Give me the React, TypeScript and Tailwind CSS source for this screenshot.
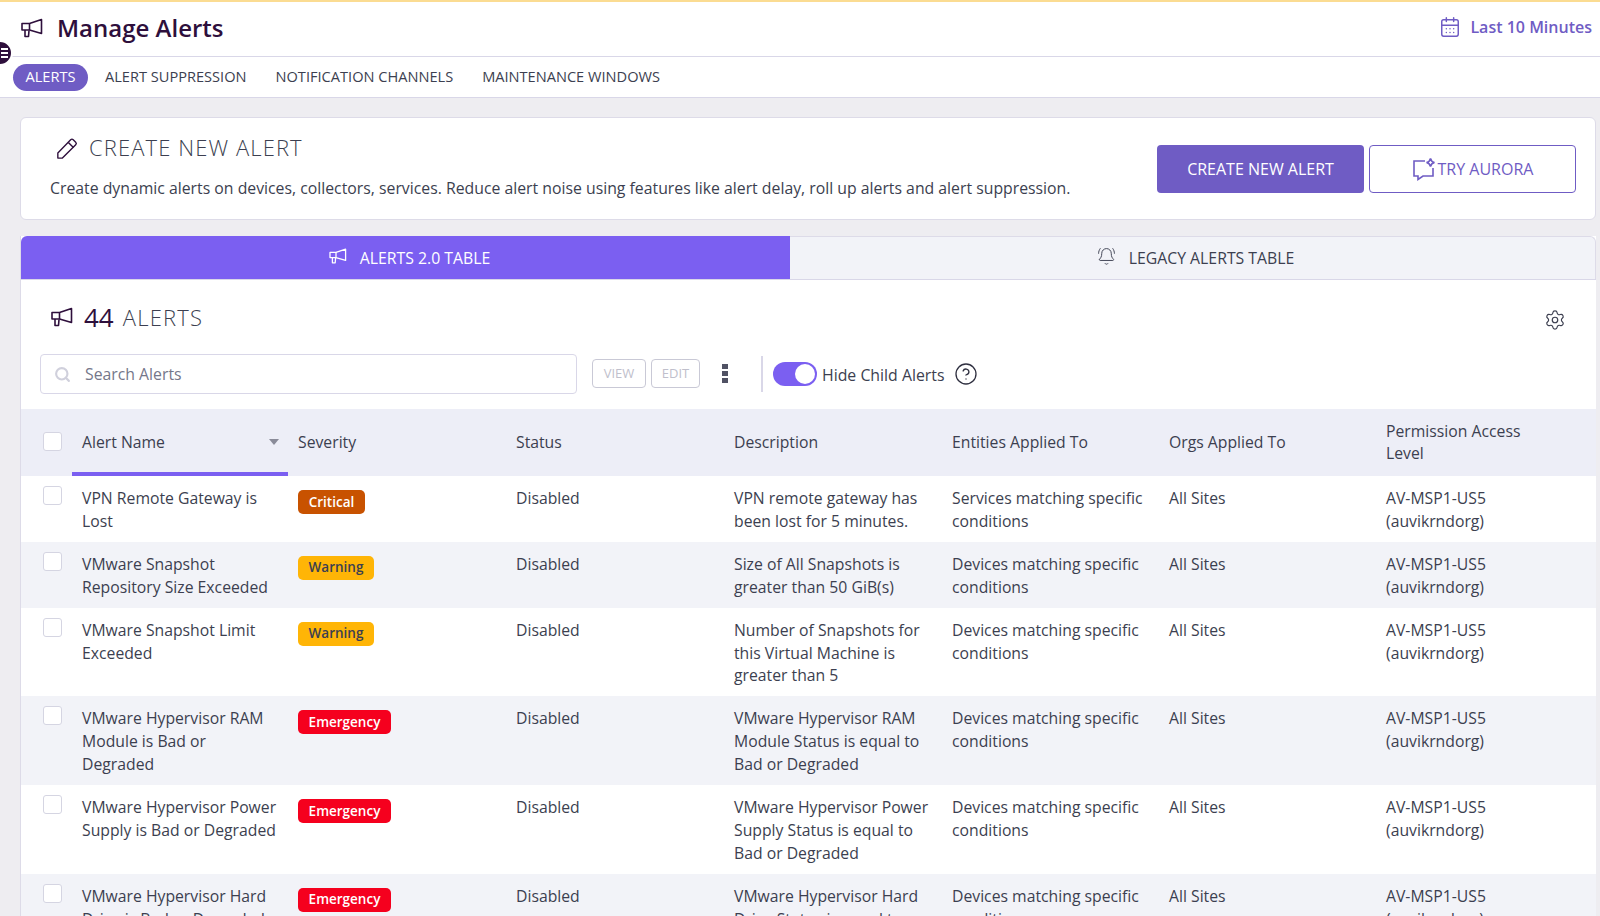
import { useState } from "react";
import { BellRing, CalendarDays, CircleHelp, Search, Settings } from "lucide-react";

const columns = "grid grid-cols-[51px_216px_218px_218px_218px_217px_217px_220px]";

type Severity = "Critical" | "Warning" | "Emergency";

const badgeStyles: Record<Severity, string> = {
  Critical: "bg-[#c85200] text-white w-[67px]",
  Warning: "bg-[#ffb506] text-[#3b3f52] w-[76px]",
  Emergency: "bg-[#f5001e] text-white w-[93px]",
};

const rows: {
  name: string;
  severity: Severity;
  description: string;
  entities: string;
}[] = [
  {
    name: "VPN Remote Gateway is Lost",
    severity: "Critical",
    description: "VPN remote gateway has been lost for 5 minutes.",
    entities: "Services matching specific conditions",
  },
  {
    name: "VMware Snapshot Repository Size Exceeded",
    severity: "Warning",
    description: "Size of All Snapshots is greater than 50 GiB(s)",
    entities: "Devices matching specific conditions",
  },
  {
    name: "VMware Snapshot Limit Exceeded",
    severity: "Warning",
    description: "Number of Snapshots for this Virtual Machine is greater than 5",
    entities: "Devices matching specific conditions",
  },
  {
    name: "VMware Hypervisor RAM Module is Bad or Degraded",
    severity: "Emergency",
    description: "VMware Hypervisor RAM Module Status is equal to Bad or Degraded",
    entities: "Devices matching specific conditions",
  },
  {
    name: "VMware Hypervisor Power Supply is Bad or Degraded",
    severity: "Emergency",
    description: "VMware Hypervisor Power Supply Status is equal to Bad or Degraded",
    entities: "Devices matching specific conditions",
  },
  {
    name: "VMware Hypervisor Hard Drive is Bad or Degraded",
    severity: "Emergency",
    description: "VMware Hypervisor Hard Drive Status is equal to Bad or Degraded",
    entities: "Devices matching specific conditions",
  },
];

function MegaphoneIcon({ className }: { className: string }) {
  return (
    <svg viewBox="0 0 22 20" fill="none" stroke="currentColor" strokeWidth="1.6" strokeLinejoin="round" className={className}>
      <path d="M1 5.500h7.500L20.500 1.500v14L8.500 12H1z" />
      <path d="M8.500 5.500V12" />
      <path d="M4 12v6.500h3.500L8 12.500" />
    </svg>
  );
}

function PencilIcon({ className }: { className: string }) {
  return (
    <svg viewBox="0 0 24 24" fill="none" stroke="currentColor" strokeWidth="1.5" strokeLinejoin="round" className={className}>
      <path d="M2 17.500 16 3a2 2 0 0 1 2.800 0l2.700 2.700a2 2 0 0 1 0 2.800L7 23H2z" />
      <path d="M13.500 6l5.500 5.500" />
    </svg>
  );
}

function AuroraIcon({ className }: { className: string }) {
  return (
    <svg viewBox="0 0 24 24" fill="none" stroke="currentColor" strokeWidth="1.6" className={className}>
      <path d="M13 4H2v15h4v3.500l5-3.500h10v-8" />
      <path d="M18.500 1.500c.5 2.500 1.500 3.500 4 4-2.500.5-3.500 1.500-4 4-.5-2.500-1.500-3.500-4-4 2.500-.5 3.500-1.500 4-4z" />
    </svg>
  );
}

function Checkbox() {
  return <div className="w-[19px] h-[19px] rounded-[3px] bg-white border border-[#d5d5e2]" />;
}

export default function App() {
  const [hideChild, setHideChild] = useState(true);

  return (
    <div className="relative h-[916px] overflow-hidden bg-[#eeedf1] font-['Open_Sans',sans-serif] text-[#3c3f50]">
      <div className="absolute left-[-13px] top-[40px] w-[26px] h-[26px] rounded-full bg-[#2e0f3c] border-2 border-white flex flex-col justify-center items-end gap-[2px] pr-[3px]">
        <span className="block w-[7px] h-[2px] bg-white" />
        <span className="block w-[7px] h-[2px] bg-white" />
        <span className="block w-[7px] h-[2px] bg-white" />
      </div>

      <header className="h-[57px] bg-white border-t-2 border-t-[#fbdc92] border-b border-b-[#d9d7e8] flex items-center justify-between pl-[21px] pr-[8px]">
        <div className="flex items-center gap-[14px] text-[#2e0f3c] mb-[2px]">
          <MegaphoneIcon className="w-[22px] h-[20px]" />
          <h1 className="text-[24px] font-semibold leading-none">Manage Alerts</h1>
        </div>
        <div className="flex items-center gap-[9px] text-[#6f5cc4] mb-[4px]">
          <CalendarDays className="w-[22px] h-[22px]" strokeWidth={1.6} />
          <span className="text-[16px] font-semibold">Last 10 Minutes</span>
        </div>
      </header>

      <nav className="h-[41px] bg-white border-b border-[#d9d7e8] flex items-center pl-[13px] text-[14.600px] text-[#3c3f50]">
        <span className="h-[27px] w-[75px] rounded-full bg-[#6f5cc4] text-white flex items-center justify-center">ALERTS</span>
        <span className="ml-[17px]">ALERT SUPPRESSION</span>
        <span className="ml-[29px]">NOTIFICATION CHANNELS</span>
        <span className="ml-[29px]">MAINTENANCE WINDOWS</span>
      </nav>

      <section className="ml-[20px] mr-[4px] mt-[19px] h-[103px] bg-white border border-[#dddbe8] rounded-[6px] flex items-center justify-between pl-[29px] pr-[19px]">
        <div className="-mt-[5px]">
          <div className="flex items-center gap-[11px] pl-[6px] text-[#2e0f3c]">
            <PencilIcon className="w-[22px] h-[22px]" />
            <span className="text-[22px] font-light tracking-[1.1px] text-[#3c3f50]">CREATE NEW ALERT</span>
          </div>
          <p className="mt-[13px] text-[15.800px] text-[#3c3f50]">
            Create dynamic alerts on devices, collectors, services. Reduce alert noise using features like alert delay, roll up alerts and alert suppression.
          </p>
        </div>
        <div className="flex gap-[5px] text-[16px]">
          <button className="w-[207px] h-[48px] rounded-[4px] bg-[#6f5cc4] text-white">CREATE NEW ALERT</button>
          <button className="w-[207px] h-[48px] rounded-[4px] bg-white border border-[#6f5cc4] text-[#6f5cc4] flex items-center justify-center gap-[2px]">
            <AuroraIcon className="w-[24px] h-[24px]" />
            TRY AURORA
          </button>
        </div>
      </section>

      <section className="ml-[20px] mr-[4px] mt-[16px] bg-white border-l border-[#dddbe8]">
        <div className="flex h-[44px] text-[15.800px] border-b border-[#d9d7e8]">
          <div className="w-[769px] bg-[#7b5ff1] text-white flex items-center justify-center gap-[13px] pl-[8px] pt-[2px] rounded-tl-[6px]">
            <MegaphoneIcon className="w-[18px] h-[16px] mb-[5px]" />
            ALERTS 2.0 TABLE
          </div>
          <div className="flex-1 bg-[#f2f3f8] flex items-center justify-center gap-[13px] pl-[6px] pt-[2px] border-t border-r border-[#dddbe8] rounded-tr-[6px]">
            <BellRing className="w-[19px] h-[19px] mb-[5px]" strokeWidth={1.2} />
            LEGACY ALERTS TABLE
          </div>
        </div>

        <div className="h-[74px] flex items-center justify-between pl-[30px] pr-[30px]">
          <div className="flex items-center gap-[11px] text-[#2e0f3c]">
            <MegaphoneIcon className="w-[22px] h-[20px]" />
            <span className="text-[26px] leading-none">44</span>
            <span className="text-[22px] font-light tracking-[1.2px] text-[#3c3f50] -ml-[2px]">ALERTS</span>
          </div>
          <Settings className="w-[22px] h-[22px] mt-[5px] text-[#3c3f50]" strokeWidth={1.3} />
        </div>

        <div className="h-[55px] flex items-start pl-[19px]">
          <div className="w-[537px] h-[40px] rounded-[4px] border border-[#d9d7e8] flex items-center pl-[13px] gap-[14px] text-[15.800px] text-[#75778a]">
            <Search className="w-[17px] h-[17px] text-[#d0d0dc]" strokeWidth={3} />
            <span className="pt-[2px]">Search Alerts</span>
          </div>
          <button className="ml-[15px] mt-[5px] w-[54px] h-[29px] rounded-[4px] border border-[#c9c9d6] text-[13px] text-[#c0c0cc]">VIEW</button>
          <button className="ml-[5px] mt-[5px] w-[49px] h-[29px] rounded-[4px] border border-[#c9c9d6] text-[13px] text-[#c0c0cc]">EDIT</button>
          <div className="ml-[22px] mt-[10px] flex flex-col gap-[2px]">
            <span className="block w-[6px] h-[5px] bg-[#505264]" />
            <span className="block w-[6px] h-[5px] bg-[#505264]" />
            <span className="block w-[6px] h-[5px] bg-[#505264]" />
          </div>
          <div className="ml-[33px] mt-[2px] w-[2px] h-[36px] bg-[#d9d7e8]" />
          <button
            onClick={() => setHideChild(!hideChild)}
            className={`ml-[10px] mt-[8px] w-[44px] h-[24px] rounded-full flex items-center px-[2px] ${hideChild ? "bg-[#7b5ff1] justify-end" : "bg-[#c9c9d6] justify-start"}`}
          >
            <span className="block w-[20px] h-[20px] rounded-full bg-white" />
          </button>
          <span className="ml-[5px] mt-[9px] text-[15.850px] leading-[24px]">Hide Child Alerts</span>
          <CircleHelp className="ml-[10px] mt-[8px] w-[24px] h-[24px] text-[#2f3040]" strokeWidth={1.3} />
        </div>

        <div className={`${columns} h-[67px] bg-[#edeef7] items-center text-[15.750px] leading-[22px]`}>
          <div className="pl-[22px] mb-[2px]"><Checkbox /></div>
          <div className="h-full flex items-center justify-between pl-[10px] pr-[9px] border-b-4 border-[#7b5ff1] pt-[2px]">
            Alert Name
            <svg viewBox="0 0 10 6" className="w-[10px] h-[6px] fill-[#8a8b99]"><path d="M0 0h10L5 6z" /></svg>
          </div>
          <div className="pl-[10px] mb-[2px]">Severity</div>
          <div className="pl-[10px] mb-[2px]">Status</div>
          <div className="pl-[10px] mb-[2px]">Description</div>
          <div className="pl-[10px] mb-[2px]">Entities Applied To</div>
          <div className="pl-[10px] mb-[2px]">Orgs Applied To</div>
          <div className="pl-[10px] pr-[40px] mb-[2px]">Permission Access Level</div>
        </div>

        {rows.map((row, i) => (
          <div
            key={row.name}
            className={`${columns} ${i % 2 === 1 ? "bg-[#f2f3f8]" : "bg-white"} pt-[11px] pb-[9px] text-[15.750px] leading-[22.900px]`}
          >
            <div className="pl-[22px] -mt-[1px]"><Checkbox /></div>
            <div className="pl-[10px] pr-[8px]">{row.name}</div>
            <div className="pl-[10px]">
              <span className={`mt-[3px] h-[24px] rounded-[5px] flex items-center justify-center text-[13.500px] font-semibold ${badgeStyles[row.severity]}`}>
                {row.severity}
              </span>
            </div>
            <div className="pl-[10px]">Disabled</div>
            <div className="pl-[10px] pr-[8px]">{row.description}</div>
            <div className="pl-[10px] pr-[8px]">{row.entities}</div>
            <div className="pl-[10px]">All Sites</div>
            <div className="pl-[10px] pr-[20px]">AV-MSP1-US5 (auvikrndorg)</div>
          </div>
        ))}
      </section>
    </div>
  );
}
